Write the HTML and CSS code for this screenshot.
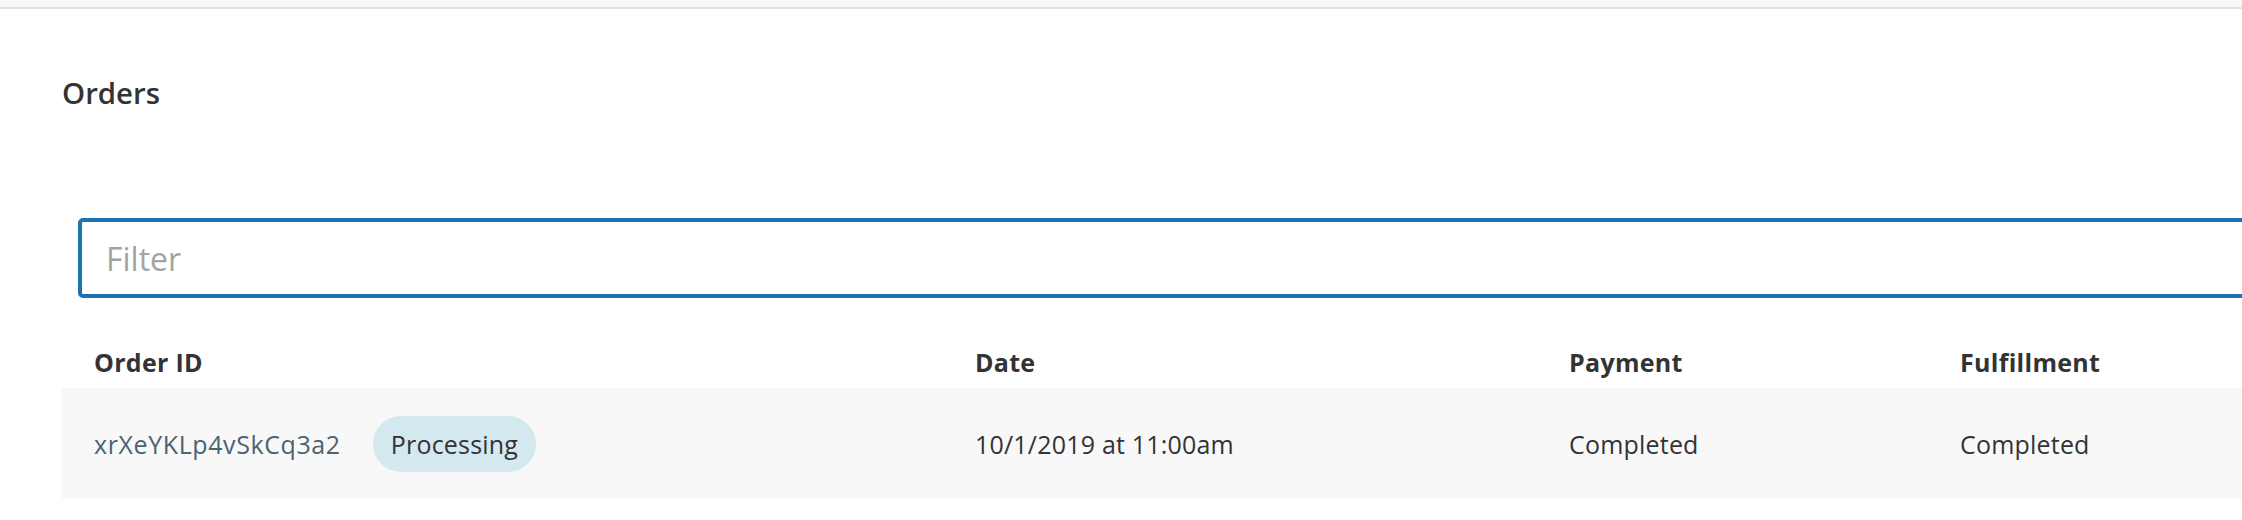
FILE: index.html
```html
<!DOCTYPE html>
<html lang="en">
<head>
<meta charset="utf-8">
<title>Orders</title>
<link rel="stylesheet" href="styles.css">
</head>
<body>
<div class="topbar"></div>
<main class="page">
  <h1 class="title">Orders</h1>
  <input class="filter" type="text" placeholder="Filter">
  <table class="orders">
    <colgroup>
      <col class="c1"><col class="c2"><col class="c3"><col class="c4">
    </colgroup>
    <thead>
      <tr>
        <th>Order ID</th>
        <th>Date</th>
        <th>Payment</th>
        <th>Fulfillment</th>
      </tr>
    </thead>
    <tbody>
      <tr>
        <td>
          <div class="id-cell">
            <a class="order-id" href="#">xrXeYKLp4vSkCq3a2</a>
            <span class="badge">Processing</span>
          </div>
        </td>
        <td>10/1/2019 at 11:00am</td>
        <td>Completed</td>
        <td>Completed</td>
      </tr>
    </tbody>
  </table>
</main>
</body>
</html>
```

FILE: styles.css
```css
html, body {
  margin: 0;
  padding: 0;
  overflow: hidden;
  background: #ffffff;
}

body {
  font-family: "Open Sans", "Noto Sans", sans-serif;
  color: #333333;
}

.topbar {
  height: 7px;
  background: #f8f8f8;
  border-bottom: 2px solid #e2e2e2;
}

.page {
  padding-left: 62px;
  width: 2500px;
}

.title {
  margin: 64px 0 0 0;
  font-size: 29.4px;
  font-weight: 600;
  line-height: 40px;
  color: #333333;
}

.filter {
  display: block;
  box-sizing: border-box;
  margin: 105px 0 0 16px;
  width: 2400px;
  height: 80px;
  border: 4px solid #1d72b3;
  border-radius: 5px;
  padding: 0 0 0 24px;
  font-family: "Open Sans", "Noto Sans", sans-serif;
  font-size: 32px;
  color: #333333;
  outline: none;
  background: #ffffff;
}

.filter::placeholder {
  color: #a3a3a3;
}

.orders {
  table-layout: fixed;
  border-collapse: collapse;
  width: 2400px;
  font-size: 25px;
  letter-spacing: 0.2px;
}

.c1 { width: 881px; }
.c2 { width: 594px; }
.c3 { width: 391px; }
.c4 { width: 534px; }

.orders thead tr {
  height: 90px;
}

.orders th {
  text-align: left;
  vertical-align: bottom;
  font-weight: 700;
  line-height: 34px;
  padding: 0 0 9px 32px;
  color: #333333;
  letter-spacing: 0.3px;
}

.orders tbody tr {
  height: 111px;
  background: #f8f8f8;
}

.orders td {
  vertical-align: middle;
  line-height: 34px;
  padding: 0 0 0 32px;
  color: #333333;
}

.id-cell {
  display: flex;
  align-items: center;
  gap: 32px;
}

.order-id {
  color: #4c6371;
  text-decoration: none;
  letter-spacing: 0.6px;
}

.badge {
  display: inline-block;
  padding: 11px 18px;
  border-radius: 28px;
  background: #d4e8f0;
  color: #333333;
}
```
